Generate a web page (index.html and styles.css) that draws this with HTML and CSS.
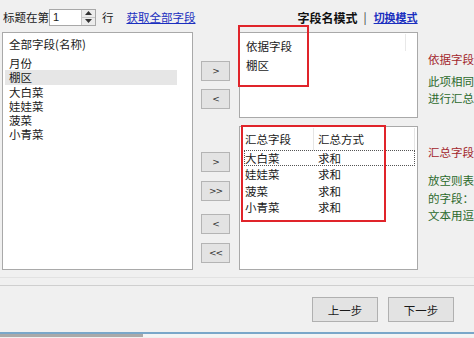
FILE: index.html
```html
<!DOCTYPE html>
<html lang="zh">
<head>
<meta charset="utf-8">
<link rel="stylesheet" href="styles.css">
</head>
<body>
<div class="win">
  <div class="top">
    <span class="lbl">标题在第</span>
    <span class="spin">
      <span class="spin-val">1</span>
      <span class="spin-btns">
        <span class="sb"><svg width="7" height="4" viewBox="0 0 7 4"><path d="M0 4 L3.5 0 L7 4Z" fill="#333"/></svg></span>
        <span class="sb"><svg width="7" height="4" viewBox="0 0 7 4"><path d="M0 0 L3.5 4 L7 0Z" fill="#333"/></svg></span>
      </span>
    </span>
    <span class="lbl row-lbl">行</span>
    <a class="link fetch">获取全部字段</a>
    <span class="mode">字段名模式</span>
    <span class="sep">|</span>
    <a class="link switch">切换模式</a>
  </div>

  <div class="main">
    <div class="list left-list">
      <div class="li head">全部字段(名称)</div>
      <div class="li">月份</div>
      <div class="li sel">棚区</div>
      <div class="li">大白菜</div>
      <div class="li">娃娃菜</div>
      <div class="li">菠菜</div>
      <div class="li">小青菜</div>
    </div>

    <div class="btncol">
      <button class="arrow b1">&gt;</button>
      <button class="arrow b2">&lt;</button>
      <button class="arrow b3">&gt;</button>
      <button class="arrow b4">&gt;&gt;</button>
      <button class="arrow b5">&lt;</button>
      <button class="arrow b6">&lt;&lt;</button>
    </div>

    <div class="rightcol">
      <div class="box topbox">
        <div class="lv-head">
          <span class="c1">依据字段</span>
          <span class="hdiv hdiv-top"></span>
        </div>
        <div class="lv-row1">棚区</div>
      </div>
      <div class="box botbox">
        <div class="lv-head2">
          <span class="col a">汇总字段</span>
          <span class="hdiv2"></span>
          <span class="col b">汇总方式</span>
          <span class="hdiv3"></span>
        </div>
        <div class="rows">
          <div class="r focus"><span class="col a">大白菜</span><span class="col b">求和</span></div>
          <div class="r"><span class="col a">娃娃菜</span><span class="col b">求和</span></div>
          <div class="r"><span class="col a">菠菜</span><span class="col b">求和</span></div>
          <div class="r"><span class="col a">小青菜</span><span class="col b">求和</span></div>
        </div>
      </div>
    </div>

    <div class="notes">
      <div class="red n1">依据字段</div>
      <div class="green n2">此项相同</div>
      <div class="green">进行汇总</div>
      <div class="red n3">汇总字段</div>
      <div class="green n4">放空则表</div>
      <div class="green">的字段：</div>
      <div class="green">文本用逗</div>
    </div>
  </div>

  <div class="rule r-a"></div>
  <div class="rule r-b"></div>

  <div class="footer">
    <button class="step">上一步</button>
    <button class="step">下一步</button>
  </div>

  <div class="taskbar">
    <div class="tb-left"></div>
  </div>

  <div class="mark mark-top"></div>
  <div class="mark mark-bot"></div>
</div>
</body>
</html>
```

FILE: styles.css
```css
html, body {
  margin: 0;
  padding: 0;
}
body {
  background: #f0f0f0;
  font-family: "Noto Sans CJK SC", "Microsoft YaHei", sans-serif;
  font-size: 11.5px;
  color: #1a1a1a;
  width: 474px;
  height: 338px;
  overflow: hidden;
}
.win {
  position: relative;
  width: 474px;
  height: 338px;
  overflow: hidden;
}

/* top bar */
.top {
  height: 32px;
  display: flex;
  align-items: center;
  white-space: nowrap;
  padding-left: 3px;
  padding-top: 2px;
  box-sizing: border-box;
}
.lbl { line-height: 16px; }
.spin {
  display: flex;
  margin-left: 0;
  width: 47px;
  height: 17px;
  box-sizing: border-box;
  border: 1px solid #a8a8a8;
  background: #fff;
}
.spin-val {
  flex: 1;
  font-family: "Liberation Sans", sans-serif;
  font-size: 11px;
  line-height: 15px;
  padding-left: 3px;
}
.spin-btns {
  width: 13px;
  display: flex;
  flex-direction: column;
  border-left: 1px solid #c8c8c8;
}
.sb {
  flex: 1;
  display: flex;
  align-items: center;
  justify-content: center;
  background: #ececec;
}
.sb + .sb { border-top: 1px solid #c8c8c8; }
.row-lbl { margin-left: 6px; }
.link {
  color: #1a2fbf;
  text-decoration: underline;
  font-weight: bold;
  line-height: 16px;
}
.fetch { margin-left: 13px; font-weight: normal; }
.mode {
  margin-left: 102px;
  font-weight: bold;
  font-size: 12px;
  color: #111;
}
.sep { margin: 0 7px 0 6px; color: #333; }
.switch { font-size: 11px; }

/* main */
.main {
  display: flex;
  height: 238px;
}
.list, .box {
  background: #fff;
  border: 1px solid #a9a9a9;
  box-sizing: border-box;
}
.left-list {
  width: 193px;
  margin-left: 2px;
  padding: 4px 0 0 2px;
}
.li {
  line-height: 14.2px;
  padding-left: 4px;
  width: 172px;
  box-sizing: border-box;
}
.li.head { margin-bottom: 5px; padding-left: 4px; }
.li.sel { background: #e6e6e6; }

.btncol {
  width: 29px;
  margin-left: 8px;
  display: flex;
  flex-direction: column;
}
.arrow {
  width: 29px;
  height: 20px;
  padding: 0;
  margin: 0;
  border: 1px solid #b4b4b4;
  background: #e3e3e3;
  font-family: "DejaVu Sans", sans-serif;
  font-size: 9px;
  color: #333;
  line-height: 18px;
  letter-spacing: -1px;
}
.b1 { margin-top: 29px; }
.b2 { margin-top: 8px; }
.b3 { margin-top: 43px; }
.b4 { margin-top: 9px; }
.b5 { margin-top: 13px; }
.b6 { margin-top: 9px; }

.rightcol {
  width: 181px;
  margin-left: 9px;
  display: flex;
  flex-direction: column;
}
.topbox {
  height: 86px;
  position: relative;
}
.lv-head {
  display: flex;
  height: 22px;
  align-items: center;
  padding-left: 6px;
  padding-top: 4px;
  box-sizing: border-box;
}
.hdiv-top {
  position: absolute;
  left: 165px;
  top: 1px;
  width: 1px;
  height: 17px;
  background: #e8e8e8;
}
.lv-row1 {
  padding-left: 6px;
  line-height: 14px;
  margin-top: 3px;
}
.botbox {
  margin-top: 8px;
  height: 144px;
  position: relative;
}
.lv-head2 {
  display: flex;
  align-items: center;
  height: 23px;
  padding-top: 1px;
  box-sizing: border-box;
}
.col { display: inline-block; }
.col.a { width: 73px; padding-left: 5px; box-sizing: border-box; }
.col.b { width: 80px; padding-left: 5px; box-sizing: border-box; }
.hdiv2 {
  position: absolute;
  left: 73px;
  top: 1px;
  width: 1px;
  height: 22px;
  background: #e5e5e5;
}
.hdiv3 {
  position: absolute;
  left: 174px;
  top: 1px;
  width: 1px;
  height: 22px;
  background: #e5e5e5;
}
.rows { padding-top: 0; }
.r {
  display: flex;
  line-height: 14.3px;
  width: 171px;
  margin-left: 4px;
  box-sizing: border-box;
  border: 1px solid transparent;
}
.r .col.a { padding-left: 0; width: 69px; }
.r .col.b { padding-left: 4px; }
.r.focus { border: 1px dotted #555; }

.notes {
  margin-left: 10px;
  white-space: nowrap;
  line-height: 17.5px;
}
.red { color: #a3262c; }
.green { color: #2c6a2c; }
.n1 { margin-top: 19px; }
.n2 { margin-top: 4px; }
.n3 { margin-top: 36px; }
.n4 { margin-top: 11px; }

/* rules + footer */
.rule { height: 1px; }
.r-a { margin-top: 7px; background: #e2e2e2; }
.r-b { margin-top: 7px; background: #cfcfcf; }
.footer {
  display: flex;
  justify-content: flex-end;
  gap: 10px;
  padding-right: 20px;
  margin-top: 11px;
  height: 25px;
}
.step {
  width: 66px;
  height: 25px;
  border: 1px solid #b0b0b0;
  background: #e3e3e3;
  font-family: "Noto Sans CJK SC", sans-serif;
  font-size: 11.5px;
  color: #1a1a1a;
  padding: 0;
}
.taskbar {
  margin-top: 10px;
  height: 5px;
  border-top: 2px solid #7aa7c9;
  background: #f4f4f4;
  box-sizing: border-box;
}
.tb-left {
  width: 143px;
  height: 3px;
  background: #a9a9a9;
}

/* annotation overlays */
.mark {
  position: absolute;
  border: 2px solid #e0242a;
  box-sizing: border-box;
  pointer-events: none;
}
.mark-top { left: 238px; top: 25px; width: 71px; height: 62px; }
.mark-bot { left: 241px; top: 125px; width: 145px; height: 97px; }
```
